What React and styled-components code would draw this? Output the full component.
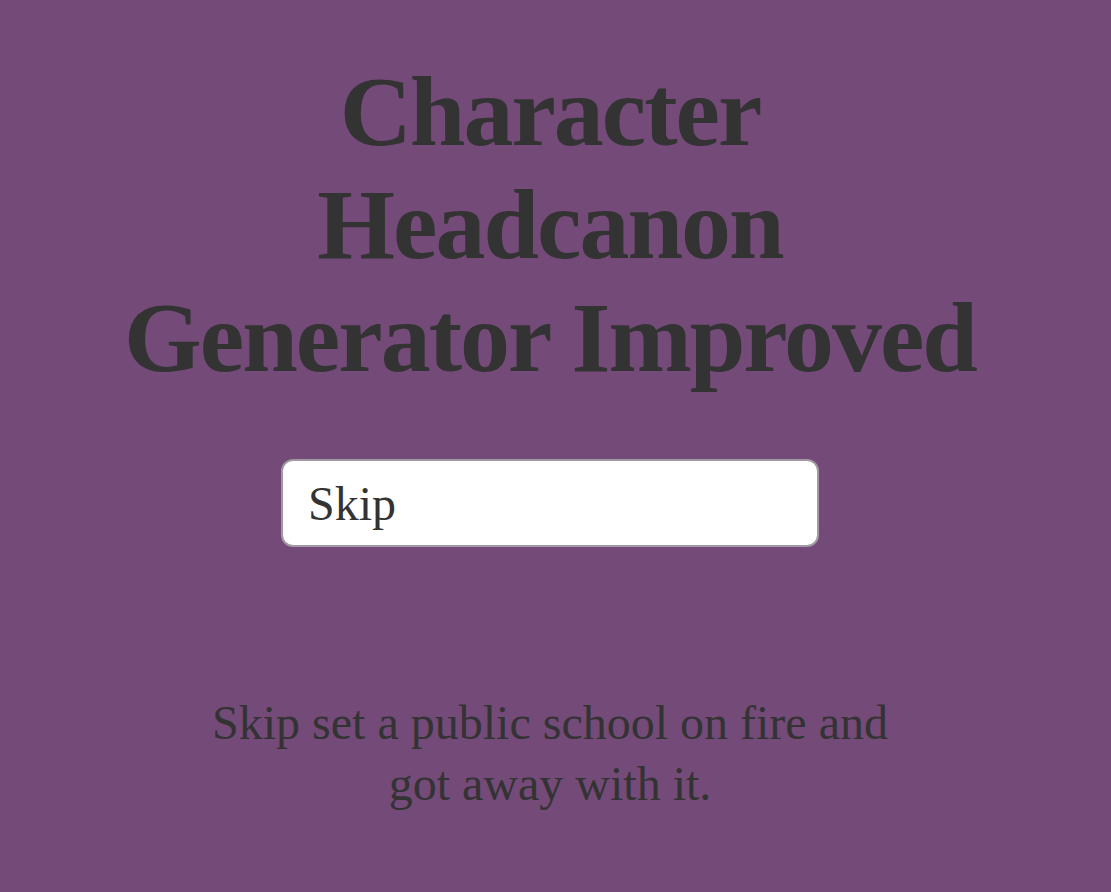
import React, {useState} from 'react';
import styled, {createGlobalStyle} from 'styled-components';

const INK = '#333333';

const GlobalStyle = createGlobalStyle`
  html, body {
    margin: 0;
    padding: 0;
    background: #744a78;
  }
  body {
    font-family: "Liberation Serif", "Times New Roman", serif;
    color: ${INK};
  }
`;

const Page = styled.main`
  min-height: 892px;
  display: flex;
  flex-direction: column;
  align-items: center;
  padding: 55px 11px 0 0;
  box-sizing: border-box;
`;

const Title = styled.h1`
  margin: 0;
  width: 870px;
  text-align: center;
  font-size: 100px;
  line-height: 113px;
  letter-spacing: -2px;
  font-weight: bold;
  color: ${INK};
`;

const NameInput = styled.input`
  margin-top: 65px;
  width: 538px;
  height: 88px;
  box-sizing: border-box;
  padding: 0 25px;
  border: 2px solid #a19aa3;
  border-radius: 12px;
  background: #fff;
  font-family: inherit;
  font-size: 48px;
  color: ${INK};
  outline: none;
`;

const Result = styled.p`
  margin: 145px 0 0;
  width: 720px;
  text-align: center;
  font-size: 48px;
  line-height: 61px;
  color: ${INK};
`;

export default function App() {
    const [name, setName] = useState('Skip');
    return (
        <>
            <GlobalStyle/>
            <Page>
                <Title>Character Headcanon Generator Improved</Title>
                <NameInput value={name} onChange={e => setName(e.target.value)}/>
                <Result>{name} set a public school on fire and got away with it.</Result>
            </Page>
        </>
    );
}
